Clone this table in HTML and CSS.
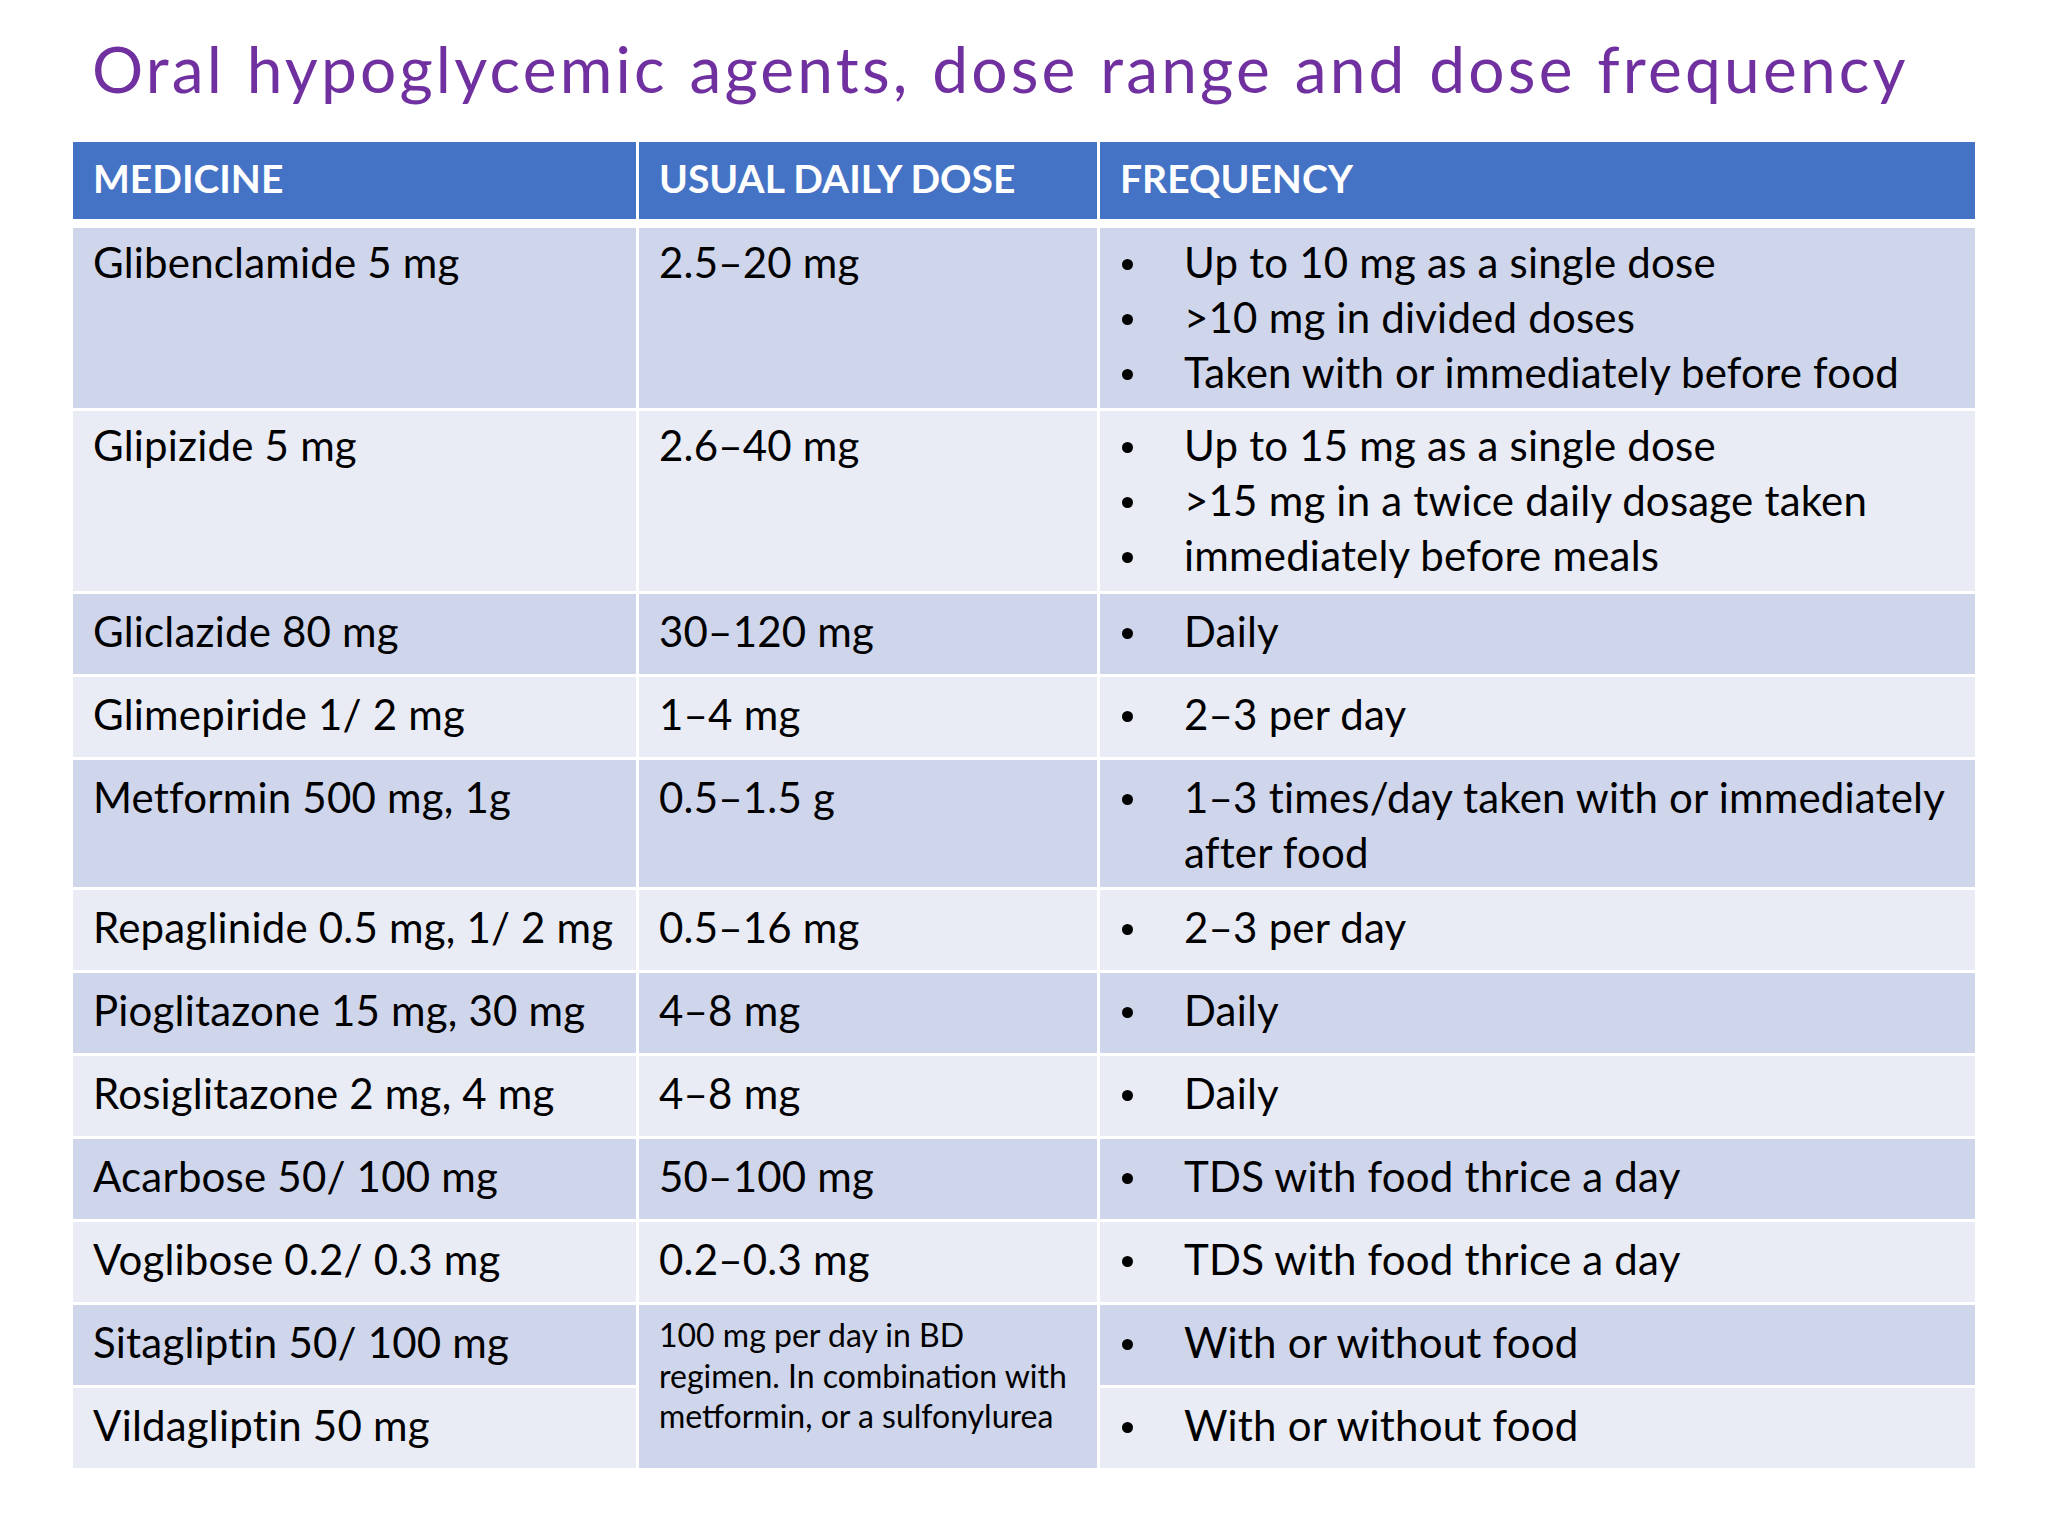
FILE: index.html
```html
<!DOCTYPE html>
<html lang="en">
<head>
<meta charset="utf-8">
<title>Oral hypoglycemic agents</title>
<link rel="stylesheet" href="styles.css">
</head>
<body>
<main class="slide">
  <h1 class="title">Oral hypoglycemic agents, dose range and dose frequency</h1>
  <div class="table">
    <div class="thead">
      <div class="th">MEDICINE</div>
      <div class="th">USUAL DAILY DOSE</div>
      <div class="th">FREQUENCY</div>
    </div>
    <div class="tbody">
      <div class="td odd">Glibenclamide 5 mg</div>
      <div class="td odd">2.5–20 mg</div>
      <ul class="td odd freq">
        <li>Up to 10 mg as a single dose</li>
        <li>&gt;10 mg in divided doses</li>
        <li>Taken with or immediately before food</li>
      </ul>

      <div class="td even">Glipizide 5 mg</div>
      <div class="td even">2.6–40 mg</div>
      <ul class="td even freq">
        <li>Up to 15 mg as a single dose</li>
        <li>&gt;15 mg in a twice daily dosage taken</li>
        <li>immediately before meals</li>
      </ul>

      <div class="td odd">Gliclazide 80 mg</div>
      <div class="td odd">30–120 mg</div>
      <ul class="td odd freq"><li>Daily</li></ul>

      <div class="td even">Glimepiride 1/ 2 mg</div>
      <div class="td even">1–4 mg</div>
      <ul class="td even freq"><li>2–3 per day</li></ul>

      <div class="td odd">Metformin 500 mg, 1g</div>
      <div class="td odd">0.5–1.5 g</div>
      <ul class="td odd freq"><li>1–3 times/day taken with or immediately<br>after food</li></ul>

      <div class="td even">Repaglinide 0.5 mg, 1/ 2 mg</div>
      <div class="td even">0.5–16 mg</div>
      <ul class="td even freq"><li>2–3 per day</li></ul>

      <div class="td odd">Pioglitazone 15 mg, 30 mg</div>
      <div class="td odd">4–8 mg</div>
      <ul class="td odd freq"><li>Daily</li></ul>

      <div class="td even">Rosiglitazone 2 mg, 4 mg</div>
      <div class="td even">4–8 mg</div>
      <ul class="td even freq"><li>Daily</li></ul>

      <div class="td odd">Acarbose 50/ 100 mg</div>
      <div class="td odd">50–100 mg</div>
      <ul class="td odd freq"><li>TDS with food thrice a day</li></ul>

      <div class="td even">Voglibose 0.2/ 0.3 mg</div>
      <div class="td even">0.2–0.3 mg</div>
      <ul class="td even freq"><li>TDS with food thrice a day</li></ul>

      <div class="td odd">Sitagliptin 50/ 100 mg</div>
      <div class="td odd merged">100 mg per day in BD<br>regimen. In combination with<br>metformin, or a sulfonylurea</div>
      <ul class="td odd freq"><li>With or without food</li></ul>

      <div class="td even">Vildagliptin 50 mg</div>
      <ul class="td even freq"><li>With or without food</li></ul>
    </div>
  </div>
</main>
</body>
</html>
```
FILE: styles.css
```css
html, body {
  margin: 0;
  padding: 0;
  background: #ffffff;
}

.slide {
  width: 2048px;
  height: 1536px;
  box-sizing: border-box;
  padding: 32px 0 0 73px;
  font-family: Lato, "Liberation Sans", sans-serif;
  color: #000000;
}

.title {
  margin: 0 0 36px 0;
  padding-left: 19px;
  font-size: 64px;
  line-height: 74px;
  font-weight: 400;
  letter-spacing: 3.2px;
  word-spacing: 2px;
  color: #7030a0;
  white-space: nowrap;
}

.table {
  width: 1902px;
}

.thead,
.tbody {
  display: grid;
  grid-template-columns: 563px 458px 875px;
  column-gap: 3px;
}

.thead {
  height: 77px;
  background: #ffffff;
}

.th {
  background: #4472c4;
  color: #ffffff;
  font-weight: 700;
  font-size: 39px;
  line-height: 55px;
  padding: 9px 20px 0 20px;
  white-space: nowrap;
}

.tbody {
  margin-top: 9px;
  row-gap: 3px;
  grid-template-rows: 180px 180px 80px 80px 127px repeat(7, 80px);
}

.td {
  margin: 0;
  padding: 7px 20px 0 20px;
  font-size: 42px;
  line-height: 55px;
  letter-spacing: 0.2px;
  white-space: nowrap;
  overflow: visible;
}

.tbody > .td:nth-child(n+7) {
  padding-top: 10px;
}

.odd {
  background: #cfd5ea;
}

.even {
  background: #e9ebf5;
}

.freq {
  list-style: none;
}

.freq li {
  display: flex;
  align-items: flex-start;
}

.freq li::before {
  content: "";
  flex: 0 0 11px;
  width: 11px;
  height: 11px;
  margin: 24px 51px 0 2px;
  border-radius: 50%;
  background: #000000;
}

.tbody > .merged {
  grid-row: span 2;
  font-size: 32px;
  line-height: 40.5px;
  letter-spacing: 0;
  padding-top: 11px;
}
```
